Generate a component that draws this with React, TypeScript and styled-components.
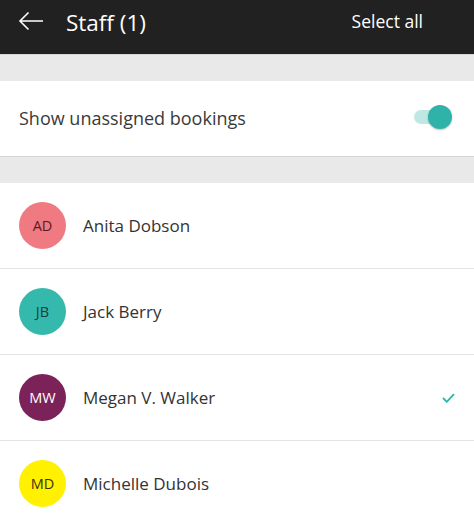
import styled, { createGlobalStyle } from "styled-components";

const staff = [
  { initials: "AD", name: "Anita Dobson", bg: "#f07a82", fg: "#5c1a22", selected: false },
  { initials: "JB", name: "Jack Berry", bg: "#36b9ad", fg: "#16403c", selected: false },
  { initials: "MW", name: "Megan V. Walker", bg: "#7b2358", fg: "#ffffff", selected: true },
  { initials: "MD", name: "Michelle Dubois", bg: "#fff100", fg: "#3a3500", selected: false },
];

const GlobalStyle = createGlobalStyle`
  body {
    margin: 0;
    font-family: "Open Sans", "Noto Sans", sans-serif;
    background: #fff;
    color: #333;
  }
`;

const BackIcon = () => (
  <svg width="26" height="20" viewBox="0 0 26 20" fill="none">
    <path d="M25 10H2M10.5 1.5L2 10l8.5 8.5" stroke="#fff" strokeWidth="1.6" />
  </svg>
);

const CheckIcon = () => (
  <svg width="13" height="10" viewBox="0 0 13 10" fill="none">
    <path d="M1 5l3.8 3.8L12 1.2" stroke="#2fb3a8" strokeWidth="1.8" />
  </svg>
);

export default function App() {
  return (
    <Page>
      <GlobalStyle />
      <Header>
        <BackIcon />
        <Title>Staff (1)</Title>
        <SelectAll>Select all</SelectAll>
      </Header>
      <Band />
      <ToggleRow>
        <Label>Show unassigned bookings</Label>
        <Toggle>
          <Track />
          <Thumb />
        </Toggle>
      </ToggleRow>
      <Band />
      <List>
        {staff.map((s) => (
          <Row key={s.initials}>
            <Avatar bg={s.bg} fg={s.fg}>{s.initials}</Avatar>
            <Name>{s.name}</Name>
            {s.selected && <CheckIcon />}
          </Row>
        ))}
      </List>
    </Page>
  );
}

const Page = styled.div`
  width: 474px;
  height: 526px;
  overflow: hidden;
`;

const Header = styled.div`
  height: 54px;
  background: #212121;
  display: flex;
  align-items: center;
  padding: 0 51px 0 18px;
  color: #fff;
  svg {
    margin-top: -12px;
  }
`;

const Title = styled.div`
  font-size: 22.5px;
  margin-left: 22px;
  margin-top: -10px;
  flex: 1;
`;

const SelectAll = styled.div`
  font-size: 17.5px;
  margin-top: -12px;
`;

const Band = styled.div`
  height: 27px;
  background: #e8e9e8;
  border-top: 1px solid #d6d6d6;
  box-sizing: border-box;
`;

const ToggleRow = styled.div`
  height: 75px;
  display: flex;
  align-items: center;
  justify-content: space-between;
  padding: 0 22px 0 19px;
`;

const Label = styled.div`
  font-size: 18px;
  color: #3a3a3a;
  margin-top: -2px;
`;

const Toggle = styled.div`
  position: relative;
  width: 40px;
  height: 26px;
  margin-top: -3px;
`;

const Track = styled.div`
  position: absolute;
  left: 2px;
  top: 6px;
  width: 34px;
  height: 14px;
  border-radius: 7px;
  background: #bfe8e4;
`;

const Thumb = styled.div`
  position: absolute;
  right: 0;
  top: 1px;
  width: 24px;
  height: 24px;
  border-radius: 50%;
  background: #2fb3a8;
  box-shadow: 0 1px 2px rgba(0, 0, 0, 0.25);
`;

const List = styled.div`
  display: flex;
  flex-direction: column;
`;

const Row = styled.div`
  height: 86px;
  display: flex;
  align-items: center;
  padding: 0 19px;
  gap: 17px;
  border-bottom: 1px solid #e4e4e4;
  box-sizing: border-box;
`;

const Avatar = styled.div<{ bg: string; fg: string }>`
  width: 47px;
  height: 47px;
  border-radius: 50%;
  background: ${(p) => p.bg};
  color: ${(p) => p.fg};
  display: flex;
  align-items: center;
  justify-content: center;
  font-size: 14.5px;
  flex-shrink: 0;
`;

const Name = styled.div`
  flex: 1;
  font-size: 17px;
  color: #333;
`;
